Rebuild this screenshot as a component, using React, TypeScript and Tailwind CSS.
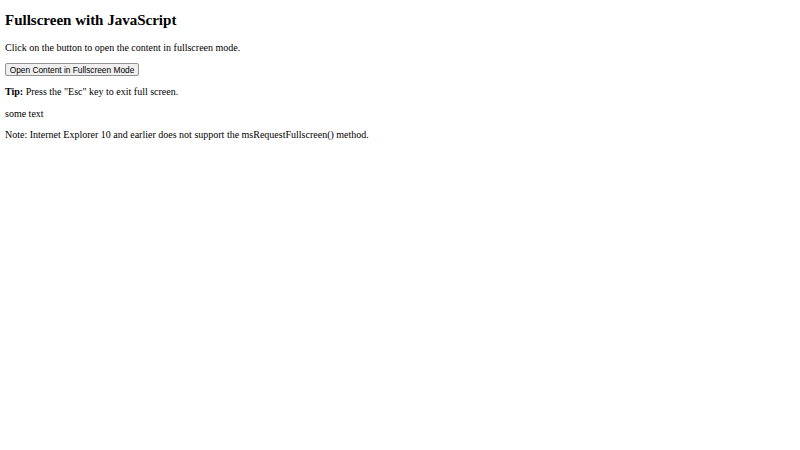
export default function App() {
    return (
        <div className="w-[800px] h-[450px] bg-white text-black px-[5px] pt-[12.45px] font-['Liberation_Serif',serif]">
            <h2 className="text-[15px] font-bold leading-[1.15] mb-[12.45px]">Fullscreen with JavaScript</h2>
            <p className="text-[10px] leading-[1.15] mb-[9.6px]">Click on the button to open the content in fullscreen mode.</p>
            <button className="block h-[13px] px-[3.75px] text-[8.33px] leading-none font-['Liberation_Sans',sans-serif] bg-[#efefef] border border-[#949494] rounded-[2px]">
                Open Content in Fullscreen Mode
            </button>
            <p className="text-[10px] leading-[1.15] mt-[10px] mb-[10px]">
                <strong className="font-bold">Tip:</strong> Press the "Esc" key to exit full screen.
            </p>
            <div className="text-[10px] leading-[1.15] mb-[10px]">some text</div>
            <p className="text-[10px] leading-[1.15]">Note: Internet Explorer 10 and earlier does not support the msRequestFullscreen() method.</p>
        </div>
    );
}
